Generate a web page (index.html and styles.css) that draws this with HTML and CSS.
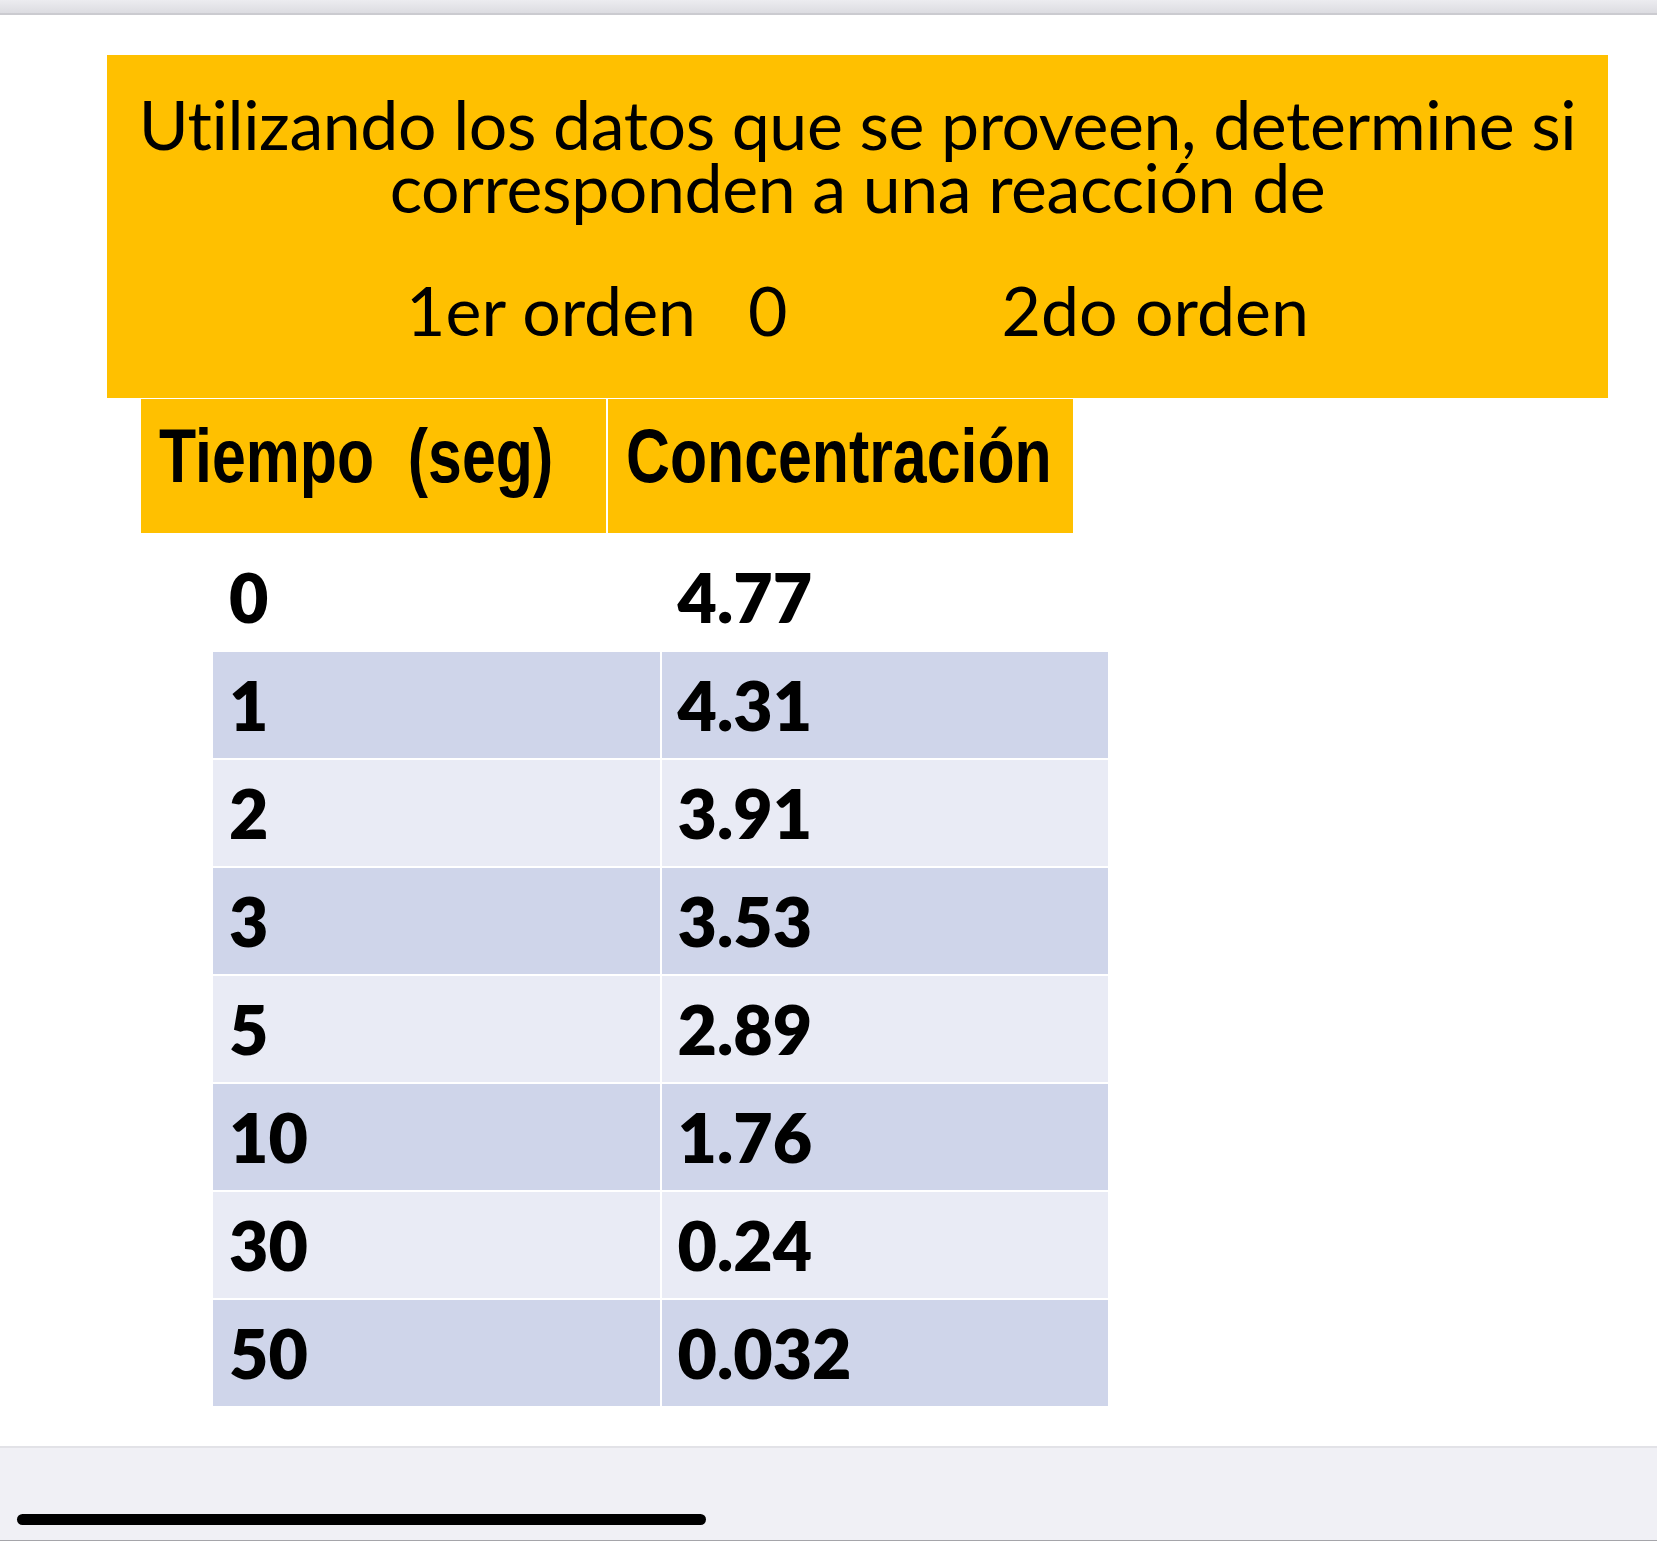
FILE: index.html
```html
<!DOCTYPE html>
<html lang="es">
<head>
<meta charset="utf-8">
<title>Orden de reacción</title>
<link rel="stylesheet" href="styles.css">
</head>
<body>
<div class="screen">
  <div class="topbar"></div>
  <main class="slide">
    <section class="banner">
      <h1 class="title"><span class="line">Utilizando los datos que se proveen, determine si</span><span class="line">corresponden a una reacción de</span></h1>
      <p class="options"><span class="opt">1er orden</span><span class="opt opt-zero">0</span><span class="opt opt-second">2do orden</span></p>
    </section>
    <div class="thead">
      <div class="th"><span class="th-text">Tiempo&nbsp; (seg)</span></div>
      <div class="th"><span class="th-text">Concentración</span></div>
    </div>
    <div class="tbody">
      <div class="row row-plain"><div class="td">0</div><div class="td">4.77</div></div>
      <div class="row row-dark"><div class="td">1</div><div class="td">4.31</div></div>
      <div class="row row-light"><div class="td">2</div><div class="td">3.91</div></div>
      <div class="row row-dark"><div class="td">3</div><div class="td">3.53</div></div>
      <div class="row row-light"><div class="td">5</div><div class="td">2.89</div></div>
      <div class="row row-dark"><div class="td">10</div><div class="td">1.76</div></div>
      <div class="row row-light"><div class="td">30</div><div class="td">0.24</div></div>
      <div class="row row-dark"><div class="td">50</div><div class="td">0.032</div></div>
    </div>
  </main>
  <footer class="bottom"><div class="home"></div></footer>
</div>
</body>
</html>
```

FILE: styles.css
```css
html, body {
  margin: 0;
  padding: 0;
  background: #ffffff;
}

.screen {
  width: 1657px;
  height: 1541px;
  overflow: hidden;
  display: flex;
  flex-direction: column;
  font-family: Lato, "Open Sans", sans-serif;
  color: #000;
}

.topbar {
  height: 13px;
  background: linear-gradient(#ececf0, #dcdce1);
  border-bottom: 2px solid #cbcbd0;
  flex: none;
}

.slide {
  height: 1431px;
  box-sizing: border-box;
  padding-top: 40px;
  background: #ffffff;
  flex: none;
}

.banner {
  margin-left: 107px;
  width: 1501px;
  height: 343px;
  box-sizing: border-box;
  background: #ffc000;
  padding-top: 37px;
}

.title {
  margin: 0;
  font-weight: 400;
  font-size: 68px;
  line-height: 63px;
  letter-spacing: -0.4px;
  text-align: center;
}

.title .line {
  display: block;
}

.options {
  margin: 60px 0 0;
  display: flex;
  justify-content: center;
  font-size: 68px;
  line-height: 63px;
}

.opt-zero {
  margin-left: 52px;
}

.opt-second {
  margin-left: 214px;
}

.thead {
  margin-top: 1px;
  margin-left: 141px;
  width: 932px;
  height: 134px;
  display: grid;
  grid-template-columns: 465px 465px;
  column-gap: 2px;
}

.th {
  background: #ffc000;
  font-family: "Liberation Sans", Arial, sans-serif;
  font-weight: 700;
  font-size: 76px;
  line-height: 1;
  padding: 19px 0 0 18px;
  white-space: nowrap;
  overflow: hidden;
  min-width: 0;
}

.th-text {
  display: inline-block;
  transform: scaleX(0.8);
  transform-origin: left center;
}

.tbody {
  margin-top: 11px;
  margin-left: 213px;
  width: 895px;
  display: flex;
  flex-direction: column;
  row-gap: 2px;
}

.row {
  height: 106px;
  display: grid;
  grid-template-columns: 1fr 1fr;
  column-gap: 2px;
}

.td {
  display: flex;
  align-items: center;
  padding-left: 16px;
  font-weight: 800;
  font-size: 68px;
  line-height: 1;
}

.row-dark .td {
  background: #cfd5ea;
}

.row-light .td {
  background: #e9ebf5;
}

.row-plain .td {
  background: transparent;
}

.bottom {
  flex: 1;
  background: #f0f0f5;
  border-top: 2px solid #e2e2e7;
  border-bottom: 1px solid #a5a5aa;
  padding-top: 66px;
  box-sizing: border-box;
}

.home {
  margin-left: 17px;
  width: 689px;
  height: 11px;
  border-radius: 6px;
  background: #000;
}
```
